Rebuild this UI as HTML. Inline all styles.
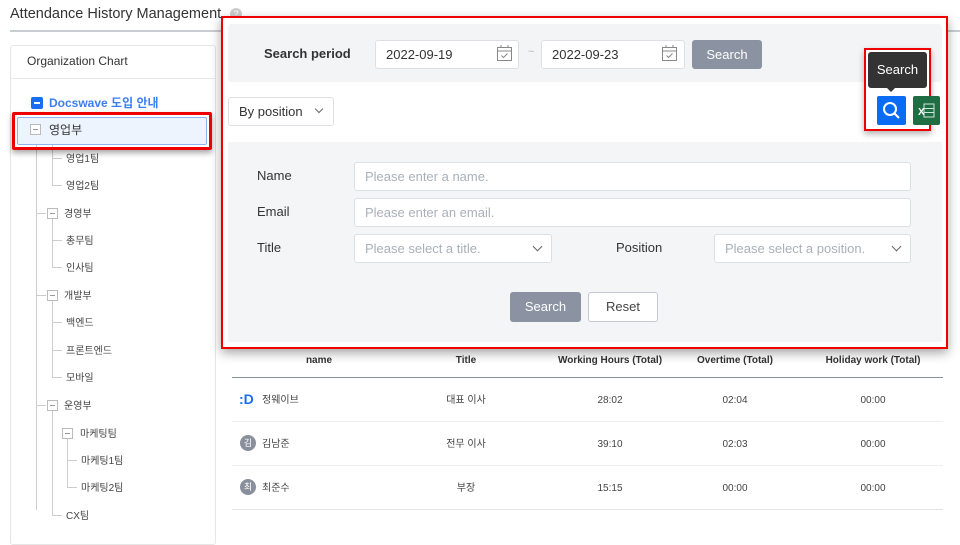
<!DOCTYPE html>
<html><head><meta charset="utf-8"><style>
*{box-sizing:border-box;margin:0;padding:0}
body{width:960px;height:538px;overflow:hidden;background:#fff;font-family:"Liberation Sans","Noto Sans CJK KR",sans-serif;color:#333;position:relative}
.a{position:absolute}
.t{font-size:10px;color:#444;white-space:nowrap;line-height:14px;margin-top:2px}
.inp{position:absolute;background:#fff;border:1px solid #dcdfe4;border-radius:3px;font-size:13px;color:#aab0ba;padding-left:10px;display:flex;align-items:center}
.chev{position:absolute;right:10px;top:8px;width:7px;height:7px;border-right:1.3px solid #666;border-bottom:1.3px solid #666;transform:rotate(45deg)}
.box{position:absolute;width:11px;height:11px;border:1px solid #bbb;background:#fff}
.box:after{content:"";position:absolute;left:2px;top:4px;width:5px;height:1px;background:#999}
.vl{position:absolute;width:1px;background:#ccc}
.hl{position:absolute;height:1px;background:#ccc}
.th{position:absolute;top:354px;line-height:14px;font-size:10px;color:#333;font-weight:bold;transform:translateX(-50%);white-space:nowrap}
.td{position:absolute;font-size:10px;line-height:14px;color:#444;transform:translateX(-50%);white-space:nowrap;margin-top:2px}
</style></head><body>
<div class="a" style="left:10px;top:6px;font-size:14.5px;line-height:17px;color:#333">Attendance History Management</div>
<div class="a" style="left:230px;top:8px;width:12px;height:12px;border-radius:50%;background:#ccc;color:#fff;font-size:9px;text-align:center;line-height:12px">?</div>
<div class="a" style="left:10px;top:30px;width:950px;height:2px;background:#c9ccd2"></div>

<div class="a" style="left:10px;top:45px;width:206px;height:500px;border:1px solid #e6e6e6;border-radius:3px"></div>
<div class="a" style="left:27px;top:54px;font-size:12px;color:#333">Organization Chart</div>
<div class="a" style="left:11px;top:78px;width:204px;height:1px;background:#e8e8e8"></div>
<div class="a" style="left:31px;top:97px;width:12px;height:12px;background:#1a6cf0;border-radius:2px"><div class="a" style="left:3px;top:5px;width:6px;height:2px;background:#fff"></div></div>
<div class="a" style="left:49px;top:94px;font-size:12px;color:#3b7ef0;font-weight:bold">Docswave 도입 안내</div>

<div class="vl" style="left:36px;top:135px;height:40px"></div>
<div class="vl" style="left:52px;top:135px;height:50px"></div>
<div class="hl" style="left:52px;top:158px;width:10px"></div>
<div class="hl" style="left:52px;top:185px;width:10px"></div>
<div class="vl" style="left:36px;top:175px;height:335px"></div>
<div class="vl" style="left:52px;top:218px;height:50px"></div>
<div class="hl" style="left:52px;top:240px;width:10px"></div>
<div class="hl" style="left:52px;top:267px;width:10px"></div>
<div class="vl" style="left:52px;top:300px;height:77px"></div>
<div class="hl" style="left:52px;top:322px;width:10px"></div>
<div class="hl" style="left:52px;top:350px;width:10px"></div>
<div class="hl" style="left:52px;top:377px;width:10px"></div>
<div class="vl" style="left:52px;top:410px;height:105px"></div>
<div class="vl" style="left:67px;top:438px;height:50px"></div>
<div class="hl" style="left:67px;top:460px;width:10px"></div>
<div class="hl" style="left:67px;top:487px;width:10px"></div>
<div class="hl" style="left:52px;top:515px;width:10px"></div>
<div class="hl" style="left:36px;top:213px;width:10px"></div>
<div class="hl" style="left:36px;top:295px;width:10px"></div>
<div class="hl" style="left:36px;top:405px;width:10px"></div>

<div class="a" style="left:12px;top:112px;width:200px;height:38px;border:3px solid #e00;border-radius:2px;box-shadow:0 3px 6px rgba(0,0,0,.35)"><div class="a" style="left:2px;top:2px;width:190px;height:28px;background:#eef4fd;border:1px solid #8fb3ee;border-radius:2px"></div></div>
<div class="box" style="left:30px;top:124px"></div>
<div class="a" style="left:49px;top:121px;font-size:12px;color:#333">영업부</div>
<div class="t a" style="left:66px;top:151px">영업1팀</div>
<div class="t a" style="left:66px;top:178px">영업2팀</div>
<div class="box" style="left:47px;top:208px"></div><div class="t a" style="left:64px;top:206px">경영부</div>
<div class="t a" style="left:66px;top:233px">총무팀</div>
<div class="t a" style="left:66px;top:260px">인사팀</div>
<div class="box" style="left:47px;top:290px"></div><div class="t a" style="left:64px;top:288px">개발부</div>
<div class="t a" style="left:66px;top:315px">백엔드</div>
<div class="t a" style="left:66px;top:343px">프론트엔드</div>
<div class="t a" style="left:66px;top:370px">모바일</div>
<div class="box" style="left:47px;top:400px"></div><div class="t a" style="left:64px;top:398px">운영부</div>
<div class="box" style="left:62px;top:428px"></div><div class="t a" style="left:80px;top:426px">마케팅팀</div>
<div class="t a" style="left:81px;top:453px">마케팅1팀</div>
<div class="t a" style="left:81px;top:480px">마케팅2팀</div>
<div class="t a" style="left:66px;top:508px">CX팀</div>

<!-- table -->
<div class="th" style="left:319px">name</div>
<div class="th" style="left:466px">Title</div>
<div class="th" style="left:610px">Working Hours (Total)</div>
<div class="th" style="left:735px">Overtime (Total)</div>
<div class="th" style="left:873px">Holiday work (Total)</div>
<div class="a" style="left:232px;top:377px;width:711px;height:1px;background:#8a909b"></div>
<div class="a" style="left:232px;top:421px;width:711px;height:1px;background:#eee"></div>
<div class="a" style="left:232px;top:465px;width:711px;height:1px;background:#eee"></div>
<div class="a" style="left:232px;top:509px;width:711px;height:1px;background:#e4e4e4"></div>
<div class="a" style="left:239px;top:391px;font-size:14px;line-height:16px;font-weight:bold;color:#1a6cf0">:D</div>
<div class="a" style="left:240px;top:435px;width:16px;height:16px;border-radius:50%;background:#8a909b;color:#fff;font-size:9px;text-align:center;line-height:16px">김</div>
<div class="a" style="left:240px;top:479px;width:16px;height:16px;border-radius:50%;background:#8a909b;color:#fff;font-size:9px;text-align:center;line-height:16px">최</div>
<div class="t a" style="left:262px;top:392px">정웨이브</div>
<div class="t a" style="left:262px;top:436px">김남준</div>
<div class="t a" style="left:262px;top:480px">최준수</div>
<div class="td" style="left:466px;top:392px">대표 이사</div><div class="td" style="left:610px;top:392px">28:02</div><div class="td" style="left:735px;top:392px">02:04</div><div class="td" style="left:873px;top:392px">00:00</div>
<div class="td" style="left:466px;top:436px">전무 이사</div><div class="td" style="left:610px;top:436px">39:10</div><div class="td" style="left:735px;top:436px">02:03</div><div class="td" style="left:873px;top:436px">00:00</div>
<div class="td" style="left:466px;top:480px">부장</div><div class="td" style="left:610px;top:480px">15:15</div><div class="td" style="left:735px;top:480px">00:00</div><div class="td" style="left:873px;top:480px">00:00</div>

<!-- overlay panel -->
<div class="a" style="left:221px;top:16px;width:727px;height:333px;border:2px solid #e00;background:#fff;box-shadow:0 4px 10px rgba(0,0,0,.35)"></div>
<div class="a" style="left:228px;top:24px;width:714px;height:58px;background:#f3f4f6;border-radius:3px"></div>
<div class="a" style="left:264px;top:46px;font-size:13px;line-height:16px;font-weight:bold;color:#333">Search period</div>
<div class="inp" style="left:375px;top:40px;width:144px;height:29px;color:#333">2022-09-19</div>
<div class="a" style="left:528px;top:46px;font-size:11px;color:#bbb">~</div>
<div class="inp" style="left:541px;top:40px;width:144px;height:29px;color:#333">2022-09-23</div>
<svg class="a" style="left:496px;top:44px" width="17" height="18" viewBox="0 0 17 18"><rect x="1.5" y="3.5" width="14" height="13" fill="none" stroke="#888"/><line x1="1.5" y1="7" x2="15.5" y2="7" stroke="#888"/><line x1="5" y1="1" x2="5" y2="4" stroke="#888"/><line x1="12" y1="1" x2="12" y2="4" stroke="#888"/><path d="M5.5 11.5l2 2 4-4" fill="none" stroke="#888"/></svg>
<svg class="a" style="left:661px;top:44px" width="17" height="18" viewBox="0 0 17 18"><rect x="1.5" y="3.5" width="14" height="13" fill="none" stroke="#888"/><line x1="1.5" y1="7" x2="15.5" y2="7" stroke="#888"/><line x1="5" y1="1" x2="5" y2="4" stroke="#888"/><line x1="12" y1="1" x2="12" y2="4" stroke="#888"/><path d="M5.5 11.5l2 2 4-4" fill="none" stroke="#888"/></svg>
<div class="a" style="left:692px;top:40px;width:70px;height:29px;background:#8b93a2;border-radius:3px;color:#fff;font-size:13px;text-align:center;line-height:29px">Search</div>
<div class="inp" style="left:228px;top:97px;width:106px;height:29px;color:#333">By position<span class="chev" style="top:8px;right:11px;width:6px;height:6px"></span></div>

<div class="a" style="left:228px;top:142px;width:714px;height:200px;background:#f4f5f7"></div>
<div class="a" style="left:257px;top:168px;font-size:13px;color:#333">Name</div>
<div class="a" style="left:257px;top:204px;font-size:13px;color:#333">Email</div>
<div class="a" style="left:257px;top:240px;font-size:13px;color:#333">Title</div>
<div class="a" style="left:616px;top:240px;font-size:13px;color:#333">Position</div>
<div class="inp" style="left:354px;top:162px;width:557px;height:29px">Please enter a name.</div>
<div class="inp" style="left:354px;top:198px;width:557px;height:29px">Please enter an email.</div>
<div class="inp" style="left:354px;top:234px;width:198px;height:29px">Please select a title.<span class="chev"></span></div>
<div class="inp" style="left:714px;top:234px;width:197px;height:29px">Please select a position.<span class="chev"></span></div>
<div class="a" style="left:510px;top:292px;width:71px;height:30px;background:#8b93a2;border-radius:3px;color:#fff;font-size:13px;text-align:center;line-height:30px">Search</div>
<div class="a" style="left:588px;top:292px;width:70px;height:30px;background:#fff;border:1px solid #c5c9d0;border-radius:3px;color:#444;font-size:13px;text-align:center;line-height:28px">Reset</div>

<!-- right toolbar -->
<div class="a" style="left:864px;top:48px;width:67px;height:83px;border:2px solid #e00;background:#fff;box-shadow:0 3px 6px rgba(0,0,0,.3)"></div>
<div class="a" style="left:868px;top:52px;width:59px;height:36px;background:#333;border-radius:3px;color:#fff;font-size:13px;text-align:center;line-height:36px">Search</div>
<div class="a" style="left:886px;top:87px;width:0;height:0;border-left:5px solid transparent;border-right:5px solid transparent;border-top:5px solid #333"></div>
<div class="a" style="left:877px;top:96px;width:29px;height:29px;background:#0a6cf5;border-radius:2px"></div>
<svg class="a" style="left:877px;top:96px" width="29" height="29"><circle cx="13" cy="13" r="6" fill="none" stroke="#fff" stroke-width="2"/><line x1="17.5" y1="17.5" x2="22" y2="22" stroke="#fff" stroke-width="2"/></svg>
<div class="a" style="left:913px;top:96px;width:27px;height:29px;background:#1f6e43;border-radius:2px"></div>
<svg class="a" style="left:913px;top:96px" width="27" height="29"><rect x="11" y="8" width="10" height="13" fill="none" stroke="#cfe6d8"/><line x1="11" y1="12.5" x2="21" y2="12.5" stroke="#cfe6d8"/><line x1="11" y1="16.5" x2="21" y2="16.5" stroke="#cfe6d8"/><text x="5" y="19" font-size="10" font-weight="bold" fill="#fff" font-family="Liberation Sans">X</text></svg>
</body></html>
